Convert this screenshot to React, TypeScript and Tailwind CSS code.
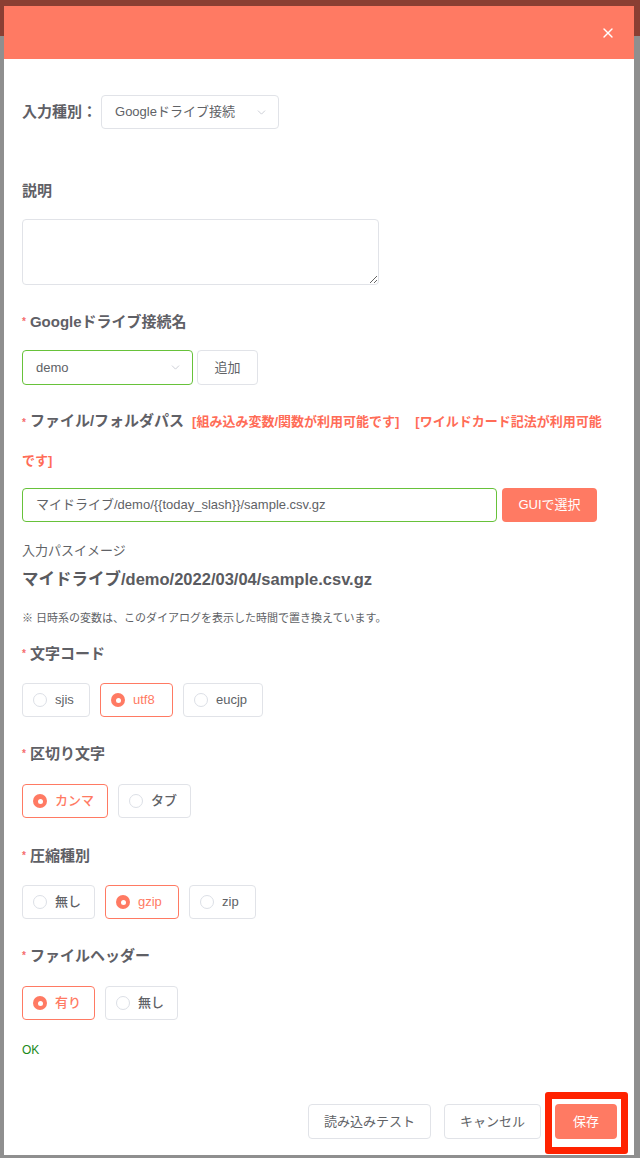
import { ChevronDown, X } from "lucide-react";

const font = "font-['Liberation_Sans','Noto_Sans_CJK_JP',sans-serif]";

function Label({ text, required = true, className = "" }: { text: string; required?: boolean; className?: string }) {
  return (
    <div className={`flex h-10 items-center text-[15px] font-bold leading-10 text-[#5f6066] ${className}`}>
      {required && <span className="mr-[4px] text-[10px] text-[#f56c6c]">*</span>}
      {text}
    </div>
  );
}

function Radio({ label, checked = false, width }: { label: string; checked?: boolean; width: string }) {
  return (
    <div
      className={`flex h-[34px] items-center gap-[8px] rounded-[4px] border pl-[10px] ${width} ${
        checked ? "border-[#ff7a63]" : "border-[#e1e3e8]"
      }`}
    >
      {checked ? (
        <span className="flex h-[14px] w-[14px] items-center justify-center rounded-full bg-[#ff7a63]">
          <span className="h-[5px] w-[5px] rounded-full bg-white" />
        </span>
      ) : (
        <span className="h-[14px] w-[14px] rounded-full border border-[#dcdfe6] bg-white" />
      )}
      <span className={`text-[13px] font-medium ${checked ? "text-[#ff7a63]" : "text-[#606266]"}`}>{label}</span>
    </div>
  );
}

export default function App() {
  return (
    <div className={`${font} min-h-[1158px] bg-[linear-gradient(to_bottom,#8a3f33_36px,#8f8f8f_36px)] pt-[6px]`}>
      <div className="ml-[4px] flex h-[1149px] w-[630px] flex-col bg-white">
        <div className="flex h-[53px] items-center justify-end bg-[#ff7a63] pr-[18px]">
          <X className="h-[16px] w-[16px] text-white" strokeWidth={2} />
        </div>

        <div className="flex flex-col pl-[18px] pr-[20px]">
          <div className="mt-[36px] flex items-center gap-[4px]">
            <span className="text-[15px] font-bold text-[#5f6066]">入力種別：</span>
            <div className="flex h-[34px] w-[178px] items-center justify-between rounded-[4px] border border-[#e1e3e8] pl-[13px] pr-[10px]">
              <span className="text-[13px] text-[#606266]">Googleドライブ接続</span>
              <ChevronDown className="h-[13px] w-[13px] text-[#c0c4cc]" strokeWidth={1.5} />
            </div>
          </div>

          <Label text="説明" required={false} className="mt-[42px]" />
          <textarea className="mt-[8px] h-[66px] w-[357px] rounded-[4px] border border-[#e1e3e8] outline-none" />

          <Label text="Googleドライブ接続名" className="mt-[17px]" />
          <div className="mt-[8px] flex gap-[4px]">
            <div className="flex h-[35px] w-[171px] items-center justify-between rounded-[4px] border border-[#67c23a] pl-[13px] pr-[10px]">
              <span className="text-[13px] text-[#606266]">demo</span>
              <ChevronDown className="h-[13px] w-[13px] text-[#c0c4cc]" strokeWidth={1.5} />
            </div>
            <div className="flex h-[35px] w-[61px] items-center justify-center rounded-[4px] border border-[#e1e3e8] text-[13px] text-[#606266]">
              追加
            </div>
          </div>

          <div className="mt-[17px] text-[15px] font-bold leading-[37px] text-[#5f6066]">
            <span className="mr-[4px] text-[10px] text-[#f56c6c]">*</span>
            ファイル/フォルダパス
            <span className="ml-[8px] text-[13px] text-[#ff6c57]">[組み込み変数/関数が利用可能です]</span>
            <span className="ml-[16px] text-[13px] text-[#ff6c57]">[ワイルドカード記法が利用可能です]</span>
          </div>
          <div className="mt-[9px] flex gap-[5px]">
            <div className="flex h-[34px] w-[475px] items-center rounded-[4px] border border-[#67c23a] pl-[13px] text-[13px] text-[#606266]">
              {"マイドライブ/demo/{{today_slash}}/sample.csv.gz"}
            </div>
            <div className="flex h-[34px] w-[95px] items-center justify-center rounded-[4px] bg-[#ff7a63] text-[13px] text-white">
              GUIで選択
            </div>
          </div>

          <div className="mt-[19px] text-[13px] leading-5 text-[#606266]">入力パスイメージ</div>
          <div className="mt-[6px] text-[16.5px] font-bold leading-6 text-[#5a5b60]">
            マイドライブ/demo/2022/03/04/sample.csv.gz
          </div>
          <div className="mt-[19px] text-[11px] leading-4 text-[#606266]">※ 日時系の変数は、このダイアログを表示した時間で置き換えています。</div>

          <Label text="文字コード" className="mt-[8px]" />
          <div className="mt-[9px] flex gap-[10px]">
            <Radio label="sjis" width="w-[68px]" />
            <Radio label="utf8" checked width="w-[73px]" />
            <Radio label="eucjp" width="w-[80px]" />
          </div>

          <Label text="区切り文字" className="mt-[17px]" />
          <div className="mt-[10px] flex gap-[10px]">
            <Radio label="カンマ" checked width="w-[86px]" />
            <Radio label="タブ" width="w-[73px]" />
          </div>

          <Label text="圧縮種別" className="mt-[18px]" />
          <div className="mt-[9px] flex gap-[10px]">
            <Radio label="無し" width="w-[73px]" />
            <Radio label="gzip" checked width="w-[74px]" />
            <Radio label="zip" width="w-[67px]" />
          </div>

          <Label text="ファイルヘッダー" className="mt-[17px]" />
          <div className="mt-[10px] flex gap-[10px]">
            <Radio label="有り" checked width="w-[73px]" />
            <Radio label="無し" width="w-[73px]" />
          </div>

          <div className="mt-[22px] text-[12px] leading-4 text-[#1a8a1a]">OK</div>

          <div className="mt-[46px] flex justify-end gap-[13px]">
            <div className="flex h-[35px] w-[123px] items-center justify-center rounded-[4px] border border-[#e1e3e8] text-[13px] text-[#606266]">
              読み込みテスト
            </div>
            <div className="flex h-[35px] w-[97px] items-center justify-center rounded-[4px] border border-[#e1e3e8] text-[13px] text-[#606266]">
              キャンセル
            </div>
            <div className="relative mr-[-3px] ml-[1px]">
              <div className="flex h-[35px] w-[62px] items-center justify-center rounded-[4px] bg-[#ff7a63] text-[13px] text-white">
                保存
              </div>
              <span className="absolute left-[-10px] top-[-12px] h-[62px] w-[83px] rounded-[3px] border-[7px] border-[#ff2200]" />
            </div>
          </div>
        </div>
      </div>
    </div>
  );
}
